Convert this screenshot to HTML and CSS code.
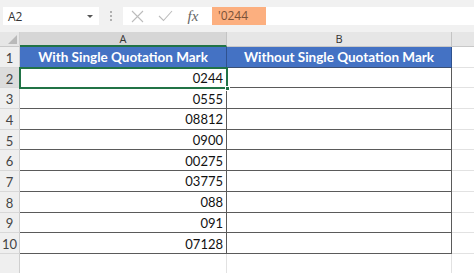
FILE: index.html
```html
<!DOCTYPE html>
<html>
<head>
<meta charset="utf-8">
<link rel="stylesheet" href="styles.css">
</head>
<body>
<div class="toolbar">
  <div class="namebox"><span class="ref">A2</span><span class="caret"></span></div>
  <div class="grip"><i></i><i></i><i></i></div>
  <div class="formula">
    <span class="ico"><svg width="13" height="13" viewBox="0 0 13 13"><path d="M1 1L12 12M12 1L1 12" stroke="#bcbcbc" stroke-width="1.1" fill="none"/></svg></span>
    <span class="ico"><svg width="15" height="12" viewBox="0 0 15 12"><path d="M1 6L5.5 10.5L14 1" stroke="#bcbcbc" stroke-width="1.1" fill="none"/></svg></span>
    <span class="ico fx">fx</span>
    <span class="content">'0244</span>
  </div>
</div>
<div class="sheet">
  <div class="corner"><span class="tri"></span></div>
  <div class="colhead sel">A</div>
  <div class="colhead">B</div>
  <div class="colhead rest"></div>

  <div class="rowhead">1</div>
  <div class="cell head">With Single Quotation Mark</div>
  <div class="cell head">Without Single Quotation Mark</div>
  <div class="grid"></div>

  <div class="rowhead sel">2</div>
  <div class="cell num active">0244<span class="handle"></span></div>
  <div class="cell"></div>
  <div class="grid"></div>

  <div class="rowhead">3</div>
  <div class="cell num">0555</div>
  <div class="cell"></div>
  <div class="grid"></div>

  <div class="rowhead">4</div>
  <div class="cell num">08812</div>
  <div class="cell"></div>
  <div class="grid"></div>

  <div class="rowhead">5</div>
  <div class="cell num">0900</div>
  <div class="cell"></div>
  <div class="grid"></div>

  <div class="rowhead">6</div>
  <div class="cell num">00275</div>
  <div class="cell"></div>
  <div class="grid"></div>

  <div class="rowhead">7</div>
  <div class="cell num">03775</div>
  <div class="cell"></div>
  <div class="grid"></div>

  <div class="rowhead">8</div>
  <div class="cell num">088</div>
  <div class="cell"></div>
  <div class="grid"></div>

  <div class="rowhead">9</div>
  <div class="cell num">091</div>
  <div class="cell"></div>
  <div class="grid"></div>

  <div class="rowhead">10</div>
  <div class="cell num">07128</div>
  <div class="cell"></div>
  <div class="grid"></div>

  <div class="rowhead"></div>
  <div class="blank"></div>
  <div class="blank"></div>
  <div class="grid"></div>
</div>
</body>
</html>
```
FILE: styles.css
```css
* { box-sizing: border-box; }
html, body { margin: 0; padding: 0; }
body {
  width: 474px;
  height: 273px;
  overflow: hidden;
  background: #ffffff;
  font-family: Lato, "Open Sans", sans-serif;
}
.toolbar {
  height: 32px;
  background: #f1f1f1;
  display: flex;
  align-items: flex-start;
  padding: 7px 0 0 3px;
}
.namebox {
  width: 96px;
  height: 18px;
  background: #fff;
  display: flex;
  align-items: center;
  justify-content: space-between;
  padding: 0 6px 0 5px;
  font-family: "Open Sans", sans-serif;
  font-size: 12px;
  color: #333;
}
.caret {
  width: 0; height: 0;
  border-left: 3px solid transparent;
  border-right: 3px solid transparent;
  border-top: 3px solid #555;
}
.grip {
  width: 24px;
  height: 18px;
  display: flex;
  flex-direction: column;
  align-items: center;
  justify-content: center;
  gap: 2px;
}
.grip i {
  display: block;
  width: 2px; height: 2px;
  background: #b0b0b0;
}
.formula {
  flex: 1;
  height: 18px;
  background: #fff;
  display: flex;
  align-items: center;
}
.ico {
  width: 28px;
  display: flex;
  justify-content: center;
  align-items: center;
}
.fx {
  font-family: "Liberation Serif", serif;
  font-style: italic;
  font-size: 15px;
  color: #666;
}
.content {
  margin-left: 5px;
  width: 54px;
  height: 18px;
  background: #fcaf7f;
  color: #7a5238;
  font-family: "Open Sans", sans-serif;
  font-size: 12px;
  line-height: 18px;
  padding-left: 6px;
}
.sheet {
  display: grid;
  grid-template-columns: 20px 207px 225px 1fr;
  grid-template-rows: 15px repeat(10, 20.7px) 20px;
}
.corner {
  background: #e6e6e6;
  border-right: 1px solid #d0d0d0;
  border-bottom: 1px solid #c8c8c8;
  position: relative;
}
.tri {
  position: absolute;
  right: 2px; bottom: 2px;
  width: 0; height: 0;
  border-left: 9px solid transparent;
  border-bottom: 9px solid #b9b9b9;
}
.colhead {
  background: #e6e6e6;
  border-right: 1px solid #c4c4c4;
  border-bottom: 1px solid #c8c8c8;
  font-family: "Open Sans", sans-serif;
  font-size: 11px;
  color: #333;
  text-align: center;
  line-height: 14px;
}
.colhead.sel {
  background: #d6d6d6;
  border-bottom: 2px solid #217346;
}
.colhead.rest { border-right: none; }
.rowhead {
  background: #efefef;
  border-right: 1px solid #cfcfcf;
  border-bottom: 1px solid #d8d8d8;
  font-family: Lato, sans-serif;
  font-size: 13px;
  color: #444;
  display: flex;
  align-items: center;
  justify-content: center;
  padding-top: 2px;
}
.rowhead.sel { background: #dcdcdc; }
.cell {
  border-right: 1px solid #5a5a5a;
  border-bottom: 1px solid #5a5a5a;
  font-size: 13px;
  color: #111;
  display: flex;
  align-items: center;
  position: relative;
  padding-top: 1px;
}
.cell.head {
  background: #4472c4;
  color: #fff;
  font-weight: 700;
  font-size: 13.5px;
  justify-content: center;
  border-right-color: #2f528f;
  border-bottom-color: #3b4f73;
}
.cell.num {
  justify-content: flex-end;
  padding-right: 3px;
}
.cell.active {
  outline: 2px solid #217346;
  outline-offset: -1px;
  z-index: 1;
}
.handle {
  position: absolute;
  right: -4px;
  bottom: -4px;
  width: 5px; height: 5px;
  background: #217346;
  border: 1px solid #fff;
}
.grid {
  border-bottom: 1px solid #e2e2e2;
}
.blank {
  border-right: 1px solid #e2e2e2;
}
```
